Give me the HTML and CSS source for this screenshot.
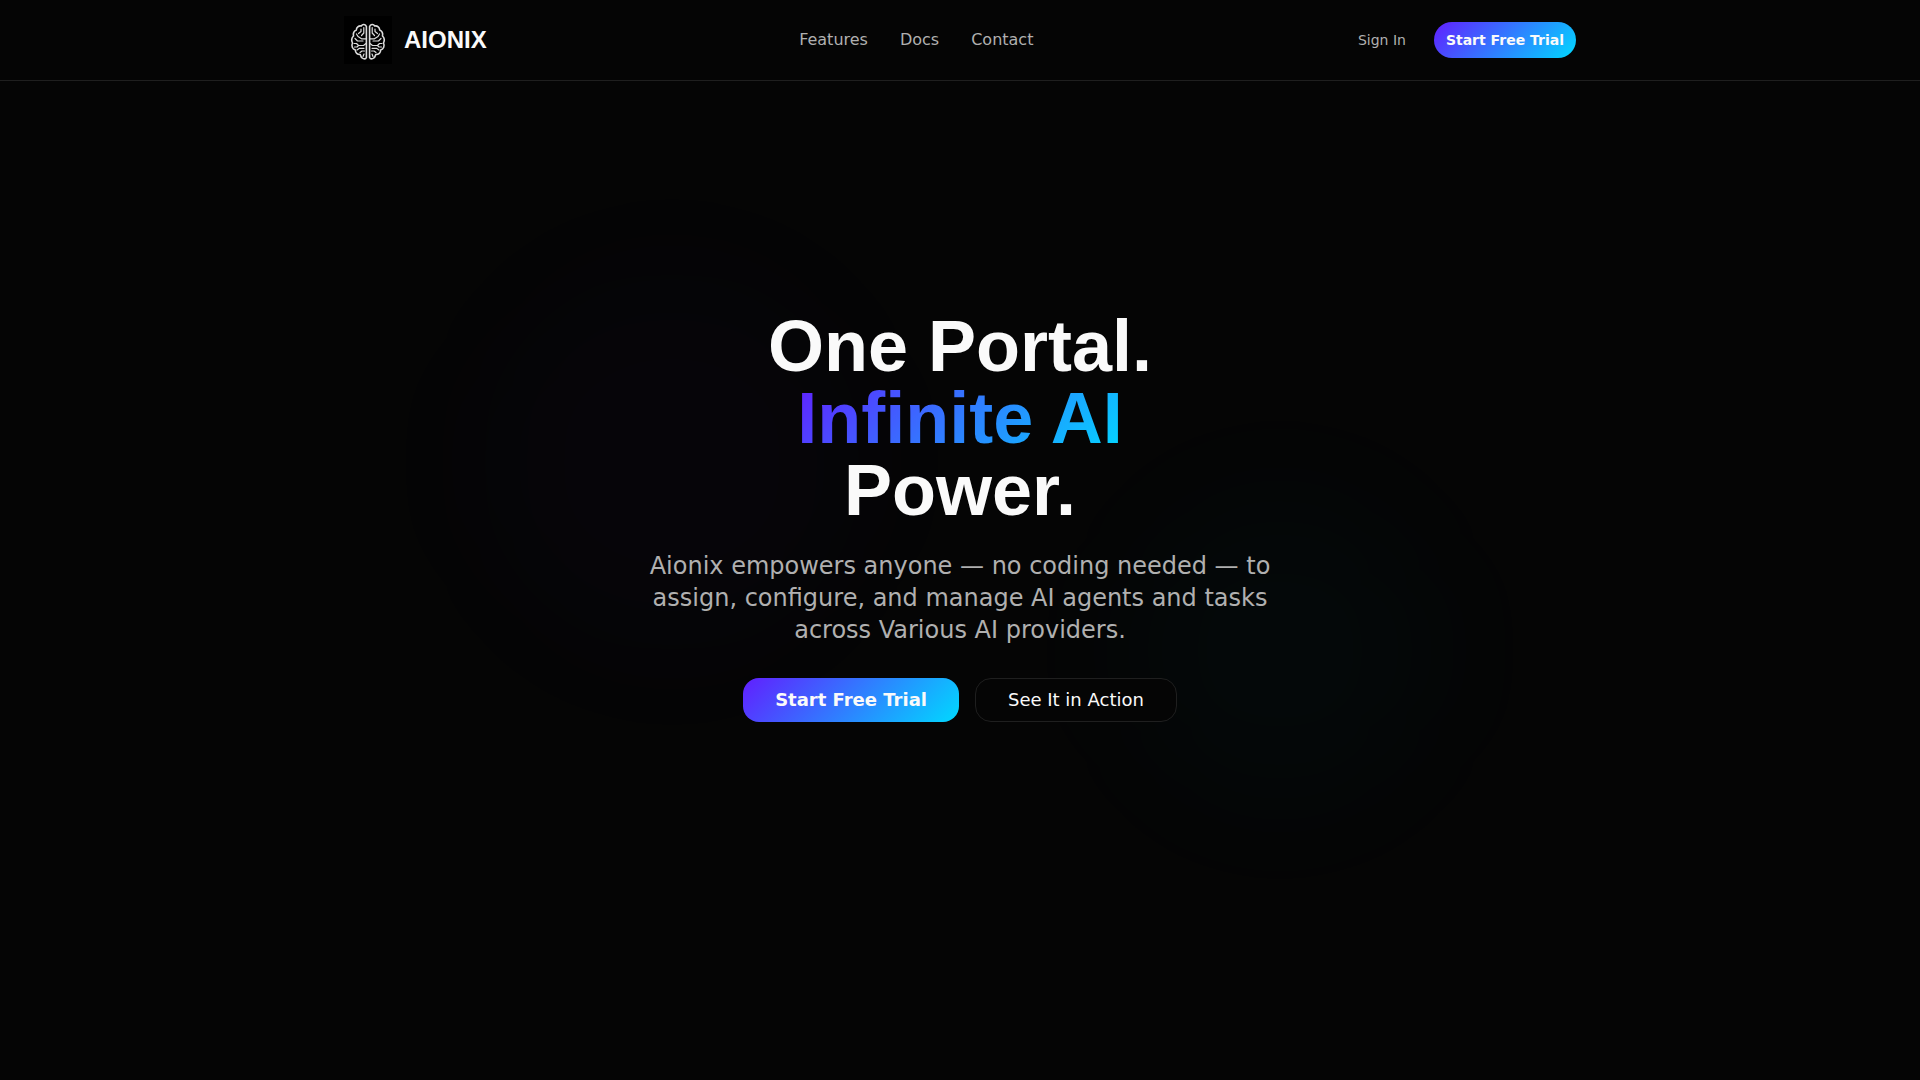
FILE: index.html
```html
<!DOCTYPE html>
<html lang="en">
<head>
<meta charset="utf-8">
<meta name="viewport" content="width=device-width, initial-scale=1">
<title>Aionix</title>
<link rel="stylesheet" href="styles.css">
</head>
<body>
<div class="glow glow-violet"></div>
<div class="glow glow-cyan"></div>
<header class="site-header">
  <div class="header-inner">
    <a class="brand" href="#">
      <svg class="brand-mark" viewBox="0 0 48 48" aria-hidden="true">
        <rect width="48" height="48" fill="#000"/>
        <defs>
          <g id="half" fill="none" stroke="#dcdcdc" stroke-width="1.2" stroke-linecap="round" stroke-linejoin="round">
            <path stroke-width="1.6" d="M22.400 10.500C21.600 8 18.500 7.800 17.300 10C14.500 9.500 12.500 11.500 12.300 14C10 15 9 17.500 9.500 20C7.500 22 7.500 25 8.500 27C7 30 8.500 33 11.300 34C11.500 37 13.500 38.500 16.200 38.500C17.200 43 21.400 44 22.400 41.500Z"/>
            <path d="M19.800 11.500V17L17.500 19.500M17 13V15.500L14.500 17.500M12.500 18L14 20.500L17.500 22.800H22.500"/>
            <path d="M11 22.500L13.500 25H19M10 27.500L12.500 27.500L14.500 29.500M10.500 31H13L14.500 29.500H19.500L22 27.500M13 34L15.500 32.300H20M16 36.500L18 35H20.500M19 40.500L20 38"/>
          </g>
        </defs>
        <use href="#half"/>
        <use href="#half" transform="translate(48 0) scale(-1 1)"/>
      </svg>
      <span class="brand-name">AIONIX</span>
    </a>
    <nav class="nav">
      <a href="#features">Features</a>
      <a href="#docs">Docs</a>
      <a href="#contact">Contact</a>
    </nav>
    <div class="actions">
      <button class="btn btn-small btn-ghost" type="button">Sign In</button>
      <button class="btn btn-small btn-primary" type="button">Start Free Trial</button>
    </div>
  </div>
</header>
<main class="hero">
  <h1 class="hero-title">One Portal. <span class="accent">Infinite AI</span> Power.</h1>
  <p class="hero-text">Aionix empowers anyone — no coding needed — to assign, configure, and manage AI agents and tasks across Various AI providers.</p>
  <div class="hero-actions">
    <button class="btn btn-large btn-primary" type="button">Start Free Trial</button>
    <button class="btn btn-large btn-outline" type="button">See It in Action</button>
  </div>
</main>
</body>
</html>
```
FILE: styles.css
```css
*, *::before, *::after { box-sizing: border-box; }

body {
  position: relative;
  display: flex;
  flex-direction: column;
  min-height: 100vh;
  margin: 0;
  overflow-x: hidden;
  background: #050505;
  color: #fafafa;
  font-family: "DejaVu Sans", sans-serif;
  font-size: 16px;
  line-height: 24px;
}

.glow {
  position: absolute;
  z-index: -1;
  border-radius: 50%;
  filter: blur(64px);
}

.glow-violet {
  top: 25%;
  left: 25%;
  width: 384px;
  height: 384px;
  background: rgb(101 31 255 / 2%);
}

.glow-cyan {
  right: 25%;
  bottom: 25%;
  width: 320px;
  height: 320px;
  background: rgb(0 217 255 / 2%);
}

.site-header { border-bottom: 1px solid #1f1f1f; }

.header-inner {
  display: flex;
  align-items: center;
  justify-content: space-between;
  max-width: 1280px;
  margin: 0 auto;
  padding: 16px 24px;
}

.brand {
  display: flex;
  align-items: center;
  gap: 12px;
  color: inherit;
  text-decoration: none;
}

.brand-mark { width: 48px; height: 48px; }

.brand-name {
  font-family: "Liberation Sans", Arial, sans-serif;
  font-size: 24px;
  font-weight: 700;
  line-height: 32px;
}

.nav { display: flex; gap: 32px; }

.nav a { color: #b0b0b0; text-decoration: none; }

.actions { display: flex; align-items: center; gap: 16px; }

.btn {
  border: 0;
  border-radius: 16px;
  background: transparent;
  color: #fafafa;
  font-family: inherit;
  cursor: pointer;
}

.btn-small {
  height: 36px;
  padding: 0 12px;
  border-radius: 18px;
  font-size: 14px;
  line-height: 20px;
}

.btn-large {
  height: 44px;
  padding: 0 32px;
  font-size: 18px;
  line-height: 28px;
}

.btn-ghost { color: #b0b0b0; }

.btn-primary {
  background: linear-gradient(135deg, #611fff, #00d9ff);
  font-weight: 700;
}

.btn-outline { border: 1px solid #1f1f1f; background: #050505; }

.hero {
  display: flex;
  flex: 1;
  flex-direction: column;
  align-items: center;
  justify-content: center;
  padding: 0 24px 130px;
  text-align: center;
}

.hero-title {
  max-width: 400px;
  margin: 0 0 24px;
  font-family: "Liberation Sans", Arial, sans-serif;
  font-size: 72px;
  font-weight: 700;
  line-height: 72px;
}

.accent {
  background: linear-gradient(135deg, #611fff, #00d9ff);
  background-clip: text;
  -webkit-background-clip: text;
  color: transparent;
}

.hero-text {
  max-width: 672px;
  margin: 0 0 32px;
  color: #b0b0b0;
  font-size: 24px;
  line-height: 32px;
}

.hero-actions { display: flex; flex-wrap: wrap; justify-content: center; gap: 16px; }
```
